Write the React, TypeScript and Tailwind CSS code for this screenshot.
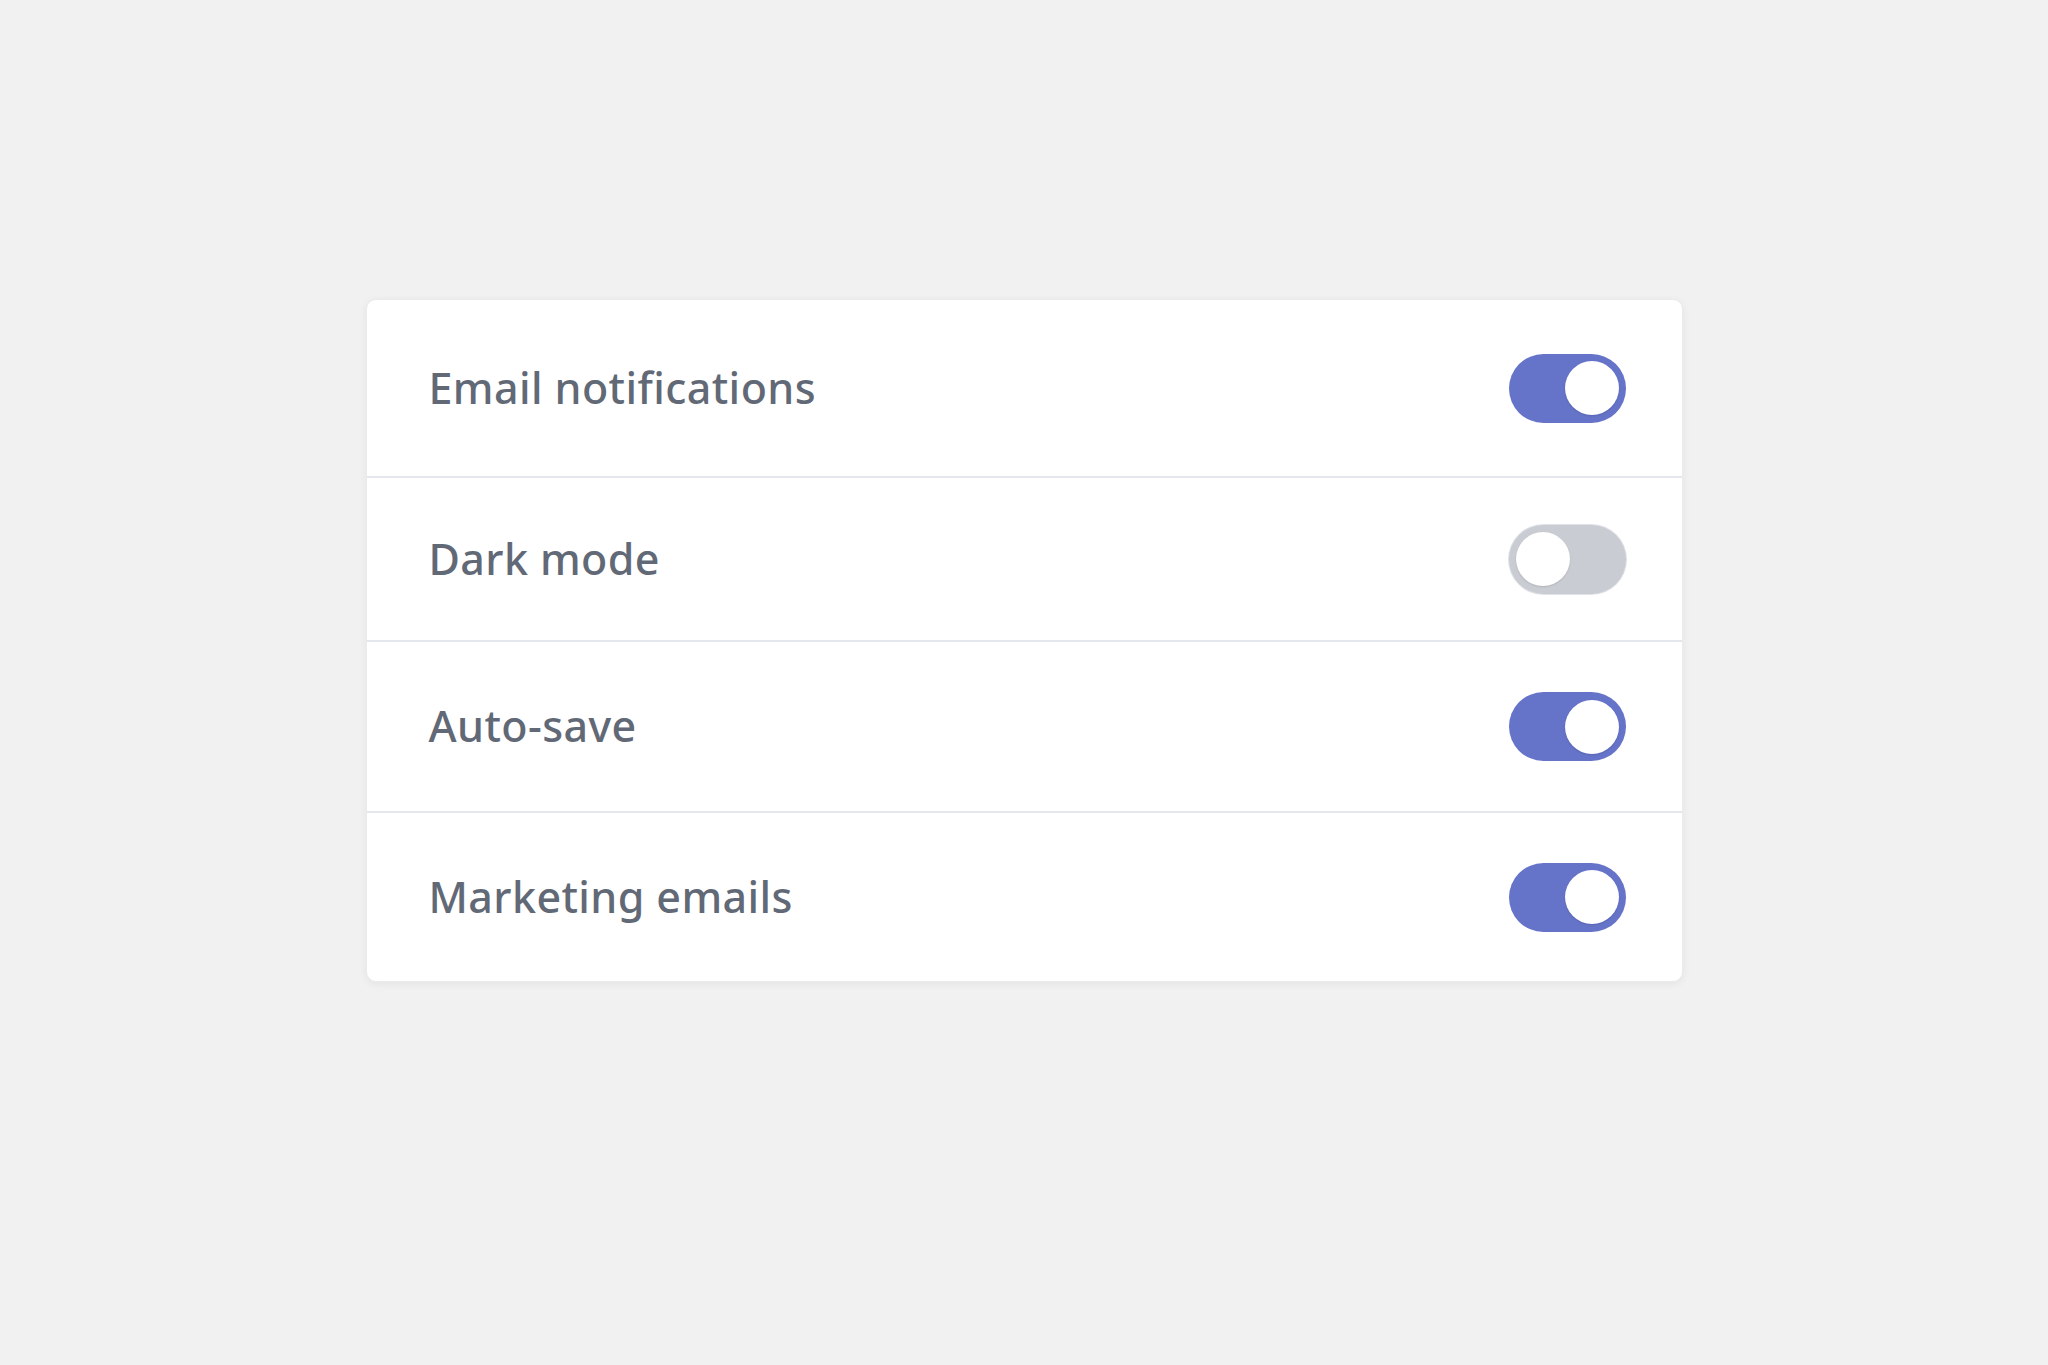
import React, { useState } from 'react';

type Setting = { id: string; label: string; on: boolean; h: string };

const initial: Setting[] = [
  { id: 'email', label: 'Email notifications', on: true, h: 'h-[178px]' },
  { id: 'dark', label: 'Dark mode', on: false, h: 'h-[164px]' },
  { id: 'autosave', label: 'Auto-save', on: true, h: 'h-[171px]' },
  { id: 'marketing', label: 'Marketing emails', on: true, h: 'h-[168px]' },
];

function Toggle({ on, onClick }: { on: boolean; onClick: () => void }) {
  return (
    <button
      type="button"
      onClick={onClick}
      className={`relative w-[117px] h-[69px] rounded-full flex items-center px-[7px] transition-colors ${
        on ? 'bg-[#6573c9] justify-end' : 'bg-[#c9cdd3] justify-start ring-1 ring-[#dfe2e6]'
      }`}
    >
      <span className="w-[54px] h-[54px] rounded-full bg-white shadow-[0_1px_2px_rgba(0,0,0,0.12)]" />
    </button>
  );
}

export default function App() {
  const [settings, setSettings] = useState(initial);

  const flip = (id: string) =>
    setSettings((s) => s.map((x) => (x.id === id ? { ...x, on: !x.on } : x)));

  return (
    <div
      className="w-full min-h-[1365px] bg-[#f1f1f1] flex justify-center pt-[299px]"
      style={{ fontFamily: '"Noto Sans", Lato, sans-serif' }}
    >
      <div className="w-[1317px] h-fit bg-white rounded-[10px] shadow-[0_2px_8px_rgba(0,0,0,0.06)] border border-[#ebebeb] overflow-hidden">
        {settings.map((s, i) => (
          <div
            key={s.id}
            className={`${s.h} flex items-center justify-between pl-[62px] pr-[56px] ${
              i < settings.length - 1 ? 'border-b-2 border-[#e4e7eb]' : ''
            }`}
          >
            <span className="text-[43px] text-[#626976] font-medium tracking-[0.4px]">{s.label}</span>
            <Toggle on={s.on} onClick={() => flip(s.id)} />
          </div>
        ))}
      </div>
    </div>
  );
}
